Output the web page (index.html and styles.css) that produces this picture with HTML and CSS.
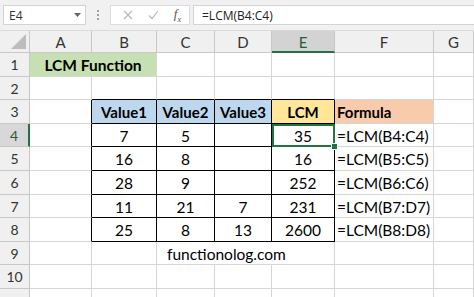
FILE: index.html
```html
<!DOCTYPE html>
<html lang="en">
  <head>
    <meta charset="UTF-8">
    <title>LCM Function</title>
    <link rel="stylesheet" href="styles.css">
  </head>
  <body>
    <div class="formula-bar">
        <div class="name-box">
            <span>E4</span>
            <svg class="caret" width="7" height="4" viewBox="0 0 7 4"><path d="M0 0H7L3.5 4Z" fill="#666"/></svg>
        </div>
        <div class="grip"></div>
        <div class="fx-buttons">
            <svg width="10" height="10" viewBox="0 0 10 10"><path d="M1 1L9 9M9 1L1 9" stroke="#b8b8b8" stroke-width="1.2"/></svg>
            <svg width="11" height="10" viewBox="0 0 11 10"><path d="M1 5.5L4 8.5L10 1" stroke="#b8b8b8" stroke-width="1.2" fill="none"/></svg>
            <span class="fx">f<sub>x</sub></span>
        </div>
        <div class="formula-input">=LCM(B4:C4)</div>
    </div>

    <div class="sheet">
        <!-- column headers -->
        <div class="corner"><div class="corner-tri"></div></div>
        <div class="col-head">A</div>
        <div class="col-head">B</div>
        <div class="col-head">C</div>
        <div class="col-head">D</div>
        <div class="col-head active">E</div>
        <div class="col-head">F</div>
        <div class="col-head">G</div>

        <!-- row 1 -->
        <div class="row-head">1</div>
        <div class="cell title">LCM Function</div>
        <div class="cell"></div>
        <div class="cell"></div>
        <div class="cell"></div>
        <div class="cell"></div>
        <div class="cell"></div>

        <!-- row 2 -->
        <div class="row-head">2</div>
        <div class="cell"></div>
        <div class="cell above"></div>
        <div class="cell above"></div>
        <div class="cell above"></div>
        <div class="cell above"></div>
        <div class="cell"></div>
        <div class="cell"></div>

        <!-- row 3 -->
        <div class="row-head">3</div>
        <div class="cell left-of"></div>
        <div class="cell tb head blue">Value1</div>
        <div class="cell tb head blue">Value2</div>
        <div class="cell tb head blue">Value3</div>
        <div class="cell tb head yellow">LCM</div>
        <div class="cell head peach text">Formula</div>
        <div class="cell"></div>

        <!-- row 4 -->
        <div class="row-head active">4</div>
        <div class="cell left-of"></div>
        <div class="cell tb">7</div>
        <div class="cell tb">5</div>
        <div class="cell tb"></div>
        <div class="cell tb selected">35</div>
        <div class="cell text">=LCM(B4:C4)</div>
        <div class="cell"></div>

        <!-- row 5 -->
        <div class="row-head">5</div>
        <div class="cell left-of"></div>
        <div class="cell tb">16</div>
        <div class="cell tb">8</div>
        <div class="cell tb"></div>
        <div class="cell tb">16</div>
        <div class="cell text">=LCM(B5:C5)</div>
        <div class="cell"></div>

        <!-- row 6 -->
        <div class="row-head">6</div>
        <div class="cell left-of"></div>
        <div class="cell tb">28</div>
        <div class="cell tb">9</div>
        <div class="cell tb"></div>
        <div class="cell tb">252</div>
        <div class="cell text">=LCM(B6:C6)</div>
        <div class="cell"></div>

        <!-- row 7 -->
        <div class="row-head">7</div>
        <div class="cell left-of"></div>
        <div class="cell tb">11</div>
        <div class="cell tb">21</div>
        <div class="cell tb">7</div>
        <div class="cell tb">231</div>
        <div class="cell text">=LCM(B7:D7)</div>
        <div class="cell"></div>

        <!-- row 8 -->
        <div class="row-head">8</div>
        <div class="cell left-of"></div>
        <div class="cell tb">25</div>
        <div class="cell tb">8</div>
        <div class="cell tb">13</div>
        <div class="cell tb">2600</div>
        <div class="cell text">=LCM(B8:D8)</div>
        <div class="cell"></div>

        <!-- row 9 -->
        <div class="row-head">9</div>
        <div class="cell"></div>
        <div class="cell"></div>
        <div class="cell site">functionolog.com</div>
        <div class="cell"></div>
        <div class="cell"></div>

        <!-- row 10 -->
        <div class="row-head">10</div>
        <div class="cell"></div>
        <div class="cell"></div>
        <div class="cell"></div>
        <div class="cell"></div>
        <div class="cell"></div>
        <div class="cell"></div>
        <div class="cell"></div>

        <!-- row 11, cut by the window edge -->
        <div class="row-head"></div>
        <div class="cell"></div>
        <div class="cell"></div>
        <div class="cell"></div>
        <div class="cell"></div>
        <div class="cell"></div>
        <div class="cell"></div>
        <div class="cell"></div>
    </div>
  </body>
</html>
```

FILE: styles.css
```css
body {
    width: 474px;
    height: 297px;
    margin: 0;
    padding: 0;
    overflow: hidden;
    background: #ffffff;
    font-family: Lato, "Liberation Sans", sans-serif;
    color: #000;
}

/* ---------- formula bar ---------- */

.formula-bar {
    height: 31px;
    box-sizing: border-box;
    background: #f1f1f1;
    border-bottom: 1px solid #dadada;
    display: flex;
    align-items: flex-start;
    padding-top: 5px;
    font-family: "Open Sans", "Noto Sans", sans-serif;
    font-size: 12px;
    color: #333;
}

.name-box {
    width: 83px;
    height: 20px;
    margin-left: 3px;
    box-sizing: border-box;
    background: #fff;
    border: 1px solid #d4d4d4;
    display: flex;
    align-items: center;
    justify-content: space-between;
    padding: 0 4px 0 5px;
}

.grip {
    width: 2px;
    height: 12px;
    margin: 4px 11px 0 11px;
    background: radial-gradient(circle, #a0a0a0 0.8px, transparent 1px) 0 0 / 2px 4px;
}

.fx-buttons {
    width: 80px;
    height: 20px;
    box-sizing: border-box;
    background: #fff;
    border: 1px solid #dcdcdc;
    display: flex;
    align-items: center;
    justify-content: space-between;
    padding: 0 8px 0 12px;
}

.fx {
    font-family: "Liberation Serif", serif;
    font-style: italic;
    font-size: 13px;
    color: #555;
}

.fx sub {
    font-size: 8px;
}

.formula-input {
    flex: 1;
    height: 20px;
    margin-left: 3px;
    box-sizing: border-box;
    background: #fff;
    border: 1px solid #d4d4d4;
    border-right: none;
    padding: 1px 0 0 8px;
    color: #222;
}

/* ---------- sheet grid ---------- */

.sheet {
    display: grid;
    grid-template-columns: 30px 62px 65px 58px 57px 63px 99px 40px;
    grid-template-rows: 22px 24px 23px 24px 23px 24px 24px 23px 24px 23px 24px 24px;
    font-size: 15.5px;
}

.corner,
.col-head,
.row-head,
.cell {
    box-sizing: border-box;
    border-right: 1px solid #d6d6d6;
    border-bottom: 1px solid #d6d6d6;
    display: flex;
    align-items: center;
    justify-content: center;
    white-space: nowrap;
}

.corner {
    background: #f0f0f0;
    border-color: #c8c8c8;
    align-items: flex-end;
    justify-content: flex-end;
    padding: 0 3px 3px 0;
}

.corner-tri {
    width: 0;
    height: 0;
    border-left: 15px solid transparent;
    border-bottom: 15px solid #bdbdbd;
}

.col-head {
    background: #f0f0f0;
    border-color: #c8c8c8;
    color: #333;
    font-size: 15px;
    padding-top: 1px;
}

.col-head.active {
    background: #d3d3d3;
    border-bottom: 2px solid #217346;
    color: #1f5e3a;
}

.row-head {
    background: #f0f0f0;
    border-color: #c8c8c8;
    color: #333;
    font-size: 14px;
}

.row-head.active {
    background: #d8d8d8;
    border-right: 2px solid #217346;
    color: #1f5e3a;
}

.cell {
    padding-top: 1px;
}

.title {
    grid-column: span 2;
    background: #c6e0b4;
    font-weight: 700;
}

/* dark table borders B3:E8 */
.tb {
    border-right-color: #000;
    border-bottom-color: #000;
}

.above {
    border-bottom-color: #000;
}

.left-of {
    border-right-color: #000;
}

.head {
    font-weight: 700;
    font-size: 15px;
}

.blue {
    background: #bdd7ee;
}

.yellow {
    background: #ffe699;
}

.peach {
    background: #f8cbad;
}

.text {
    justify-content: flex-start;
    padding-left: 2px;
}

.selected {
    position: relative;
    outline: 2px solid #217346;
    outline-offset: -2px;
}

.selected::after {
    content: "";
    position: absolute;
    right: -4px;
    bottom: -4px;
    width: 5px;
    height: 5px;
    background: #217346;
    border: 1px solid #fff;
}

.site {
    grid-column: span 3;
    justify-content: flex-start;
    padding-left: 10px;
}
```
